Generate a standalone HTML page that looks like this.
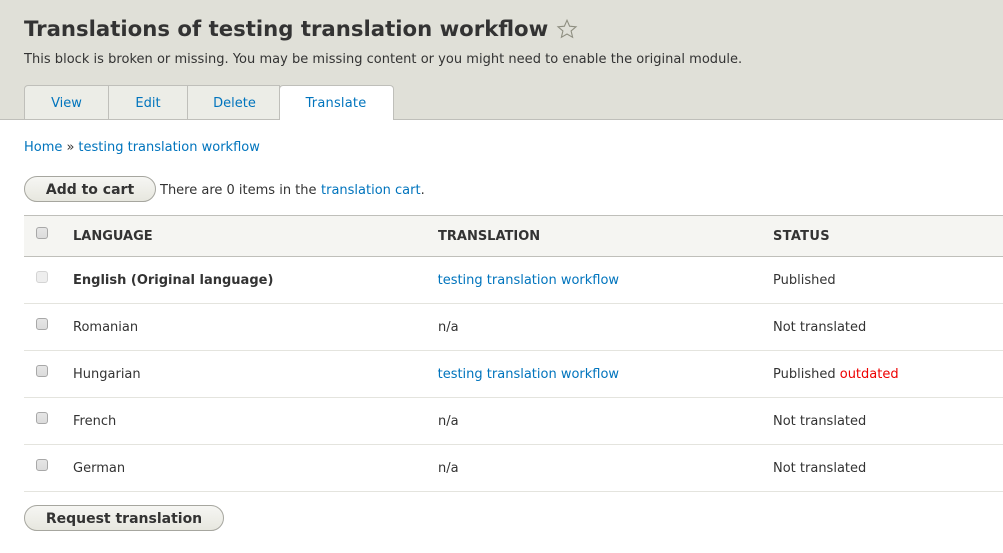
<!DOCTYPE html>
<html><head><meta charset="utf-8"><style>
html,body{margin:0;padding:0;background:#fff}
body{width:1003px;height:553px;overflow:hidden;position:relative;font-family:"DejaVu Sans",sans-serif;font-size:13px;color:#333}
.a{position:absolute;white-space:nowrap;line-height:18px}
a{color:#0074bd;text-decoration:none}
.bg{position:absolute;left:0;top:0;width:1003px;height:119px;background:#e0e0d8;border-bottom:1px solid #bfbfba}
.tab{position:absolute;top:85px;height:34px;box-sizing:border-box;background:#ecede7;border:1px solid #bfbfba;border-bottom:0;line-height:35px;text-align:center;color:#0074bd}
.btn{position:absolute;box-sizing:border-box;height:26px;border:1px solid #a6a69f;border-radius:13px;background:linear-gradient(#f6f6f3,#e7e7df);font-weight:bold;font-size:14px;line-height:26px;text-align:center;color:#333}
.hl{position:absolute;left:24px;width:979px;height:1px;background:#e4e4de}
.cb{position:absolute;left:36px;width:12px;height:12px;box-sizing:border-box;border:1px solid #a8a8a8;border-radius:3px;background:linear-gradient(#e6e6e6,#dcdcdc)}
</style></head><body>
<div class="bg"></div>
<div class="a" style="left:24px;top:16px;font-size:21.23px;line-height:28px;font-weight:bold;color:#333">Translations of testing translation workflow</div>
<svg style="position:absolute;left:556px;top:18px" width="22" height="22" viewBox="0 0 22 22"><path d="M11 2.2l2.6 6 6.4.6-4.9 4.2 1.5 6.3L11 16l-5.6 3.3 1.5-6.3L2 8.8l6.4-.6z" fill="none" stroke="#8e8e80" stroke-width="1.1"/></svg>
<div class="a" style="left:24px;top:51px;letter-spacing:.02px">This block is broken or missing. You may be missing content or you might need to enable the original module.</div>
<div class="tab" style="left:24px;width:85px;border-radius:4px 0 0 0">View</div>
<div class="tab" style="left:108px;width:80px">Edit</div>
<div class="tab" style="left:187px;width:93px;padding-left:2px">Delete</div>
<div class="tab" style="left:279px;width:115px;height:35px;background:#fff;border-radius:4px 4px 0 0;z-index:2;letter-spacing:.2px;padding-right:1px">Translate</div>
<div class="a" style="left:24px;top:139px"><a href="#">Home</a> » </div>
<div class="a" style="left:78.4px;top:139px"><a href="#">testing translation workflow</a></div>
<div class="btn" style="left:24px;top:176px;width:132px">Add to cart</div>
<div class="a" style="left:160px;top:182px">There are 0 items in the</div>
<div class="a" style="left:321px;top:182px"><a href="#">translation cart</a>.</div>
<div style="position:absolute;left:24px;top:215px;width:979px;height:40px;background:#f5f5f2;border-top:1px solid #bfbfba;border-bottom:1px solid #bfbfba"></div>
<div class="cb" style="top:227px"></div>
<div class="a" style="left:73px;top:228px;font-weight:bold">LANGUAGE</div>
<div class="a" style="left:438px;top:228px;font-weight:bold">TRANSLATION</div>
<div class="a" style="left:773px;top:228px;font-weight:bold;letter-spacing:.3px">STATUS</div>
<div class="cb" style="top:271px;background:#eee;border-color:#d4d4d4"></div>
<div class="a" style="left:73px;top:272px;font-weight:bold">English (Original language)</div>
<div class="a" style="left:437.6px;top:272px"><a href="#">testing translation workflow</a></div>
<div class="a" style="left:773px;top:272px">Published</div>
<div class="hl" style="top:303px"></div>
<div class="cb" style="top:318px"></div>
<div class="a" style="left:73px;top:319px">Romanian</div>
<div class="a" style="left:438px;top:319px">n/a</div>
<div class="a" style="left:773px;top:319px">Not translated</div>
<div class="hl" style="top:350px"></div>
<div class="cb" style="top:365px"></div>
<div class="a" style="left:73px;top:366px">Hungarian</div>
<div class="a" style="left:437.6px;top:366px"><a href="#">testing translation workflow</a></div>
<div class="a" style="left:773px;top:366px">Published <span style="color:#e00">outdated</span></div>
<div class="hl" style="top:397px"></div>
<div class="cb" style="top:412px"></div>
<div class="a" style="left:73px;top:413px">French</div>
<div class="a" style="left:438px;top:413px">n/a</div>
<div class="a" style="left:773px;top:413px">Not translated</div>
<div class="hl" style="top:444px"></div>
<div class="cb" style="top:459px"></div>
<div class="a" style="left:73px;top:460px">German</div>
<div class="a" style="left:438px;top:460px">n/a</div>
<div class="a" style="left:773px;top:460px">Not translated</div>
<div class="hl" style="top:491px"></div>
<div class="btn" style="left:24px;top:505px;width:200px">Request translation</div>
</body></html>
